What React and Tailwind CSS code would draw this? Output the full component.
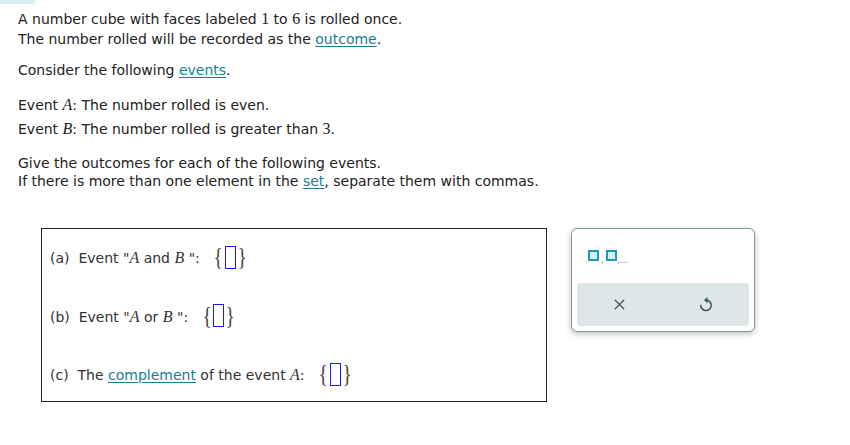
import { X } from 'lucide-react';

const M = ({ children }) => (
  <span className="italic text-[16px] leading-none" style={{ fontFamily: '"Liberation Serif", serif' }}>{children}</span>
);
const N = ({ children }) => (
  <span className="text-[16px] leading-none" style={{ fontFamily: '"Liberation Serif", serif' }}>{children}</span>
);
const L = ({ children }) => (
  <span className="text-[#1a7d96] underline underline-offset-2">{children}</span>
);

const SetInput = () => (
  <span className="inline-flex items-center align-middle ml-2 -mt-1">
    <span className="text-[26px] leading-none text-[#444] font-['Liberation_Serif',serif] font-light scale-x-75">{'{'}</span>
    <span className="inline-block w-[11px] h-[23px] border border-[#1a1aff]"></span>
    <span className="text-[26px] leading-none text-[#444] font-['Liberation_Serif',serif] font-light scale-x-75">{'}'}</span>
  </span>
);

const UndoIcon = () => (
  <svg width="18" height="18" viewBox="0 0 24 24" fill="none" stroke="#37555e" strokeWidth="2" strokeLinecap="round" strokeLinejoin="round">
    <path d="M11 5.5 A 7 7 0 1 1 5 12.5" />
    <path d="M13.5 3 L11 5.5 L13.5 8" />
  </svg>
);

export default function App() {
  return (
    <div className="relative w-[850px] h-[445px] bg-white text-[14px] text-[#222] font-['DejaVu_Sans',sans-serif]">
      <div className="absolute left-0 top-0 w-[36px] h-[4px] bg-[#d6f0f5] rounded-br-lg"></div>
      <div className="pl-[18px] pt-[9px]">
        <p className="leading-[20px]">A number cube with faces labeled <N>1</N> to <N>6</N> is rolled once.</p>
        <p className="leading-[20px]">The number rolled will be recorded as the <L>outcome</L>.</p>
        <p className="leading-[20px] mt-[11px]">Consider the following <L>events</L>.</p>
        <p className="leading-[24px] mt-[13px]">Event <M>A</M>: The number rolled is even.</p>
        <p className="leading-[24px]">Event <M>B</M>: The number rolled is greater than <N>3</N>.</p>
        <p className="leading-[18px] mt-[13px]">Give the outcomes for each of the following events.</p>
        <p className="leading-[18px]">If there is more than one element in the <L>set</L>, separate them with commas.</p>
      </div>

      <div className="flex items-start mt-[38px] ml-[41px]">
        <div className="w-[506px] h-[174px] border border-[#222] flex flex-col justify-between pt-[16px] pb-[13px] pl-[8px] text-[#333]">
          <div className="leading-[26px]">(a)&nbsp; Event "<M>A</M> and <M>B</M>&nbsp;": <SetInput /></div>
          <div className="leading-[26px]">(b)&nbsp; Event "<M>A</M> or <M>B</M>&nbsp;": <SetInput /></div>
          <div className="leading-[26px]">(c)&nbsp; The <L>complement</L> of the event <M>A</M>: <SetInput /></div>
        </div>

        <div className="ml-[24px] w-[184px] h-[104px] rounded-md border border-[#7d97a0] bg-white shadow-[0_2px_6px_rgba(0,0,0,0.25)] flex flex-col px-[5px] pb-[5px]">
          <div className="flex items-start h-[54px] pt-[21px] pl-[11px]">
            <span className="w-[11px] h-[11px] border-2 border-[#1f9bb0] bg-[#d2f1f7]"></span>
            <span className="text-[8px] text-[#777] leading-none mt-[7px] mx-[2px]">,</span>
            <span className="w-[11px] h-[11px] border-2 border-[#1f9bb0] bg-[#d2f1f7]"></span>
            <span className="text-[8px] text-[#777] leading-none mt-[7px] ml-[1px]">,...</span>
          </div>
          <div className="flex-1 rounded bg-[#dfe6e8] flex items-center justify-around">
            <X size={17} strokeWidth={1.8} className="text-[#37555e]" />
            <UndoIcon />
          </div>
        </div>
      </div>
    </div>
  );
}
